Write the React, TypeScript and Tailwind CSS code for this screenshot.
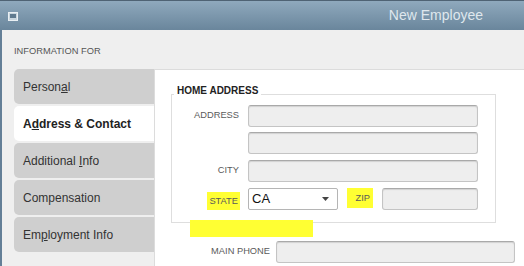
import React from "react";

const font = { fontFamily: '"Liberation Sans", Arial, sans-serif' };

function Field({ className = "" }: { className?: string }) {
  return (
    <div
      className={`h-[22px] rounded-[3px] border border-[#c4c4c4] border-t-[#a9a9a9] bg-[#eeeeee] shadow-[inset_0_1px_1px_rgba(0,0,0,0.12)] ${className}`}
    />
  );
}

function Label({ children, className = "" }: { children: React.ReactNode; className?: string }) {
  return <span className={`text-[9.3px] uppercase text-[#5a5a5a] ${className}`}>{children}</span>;
}

type Tab = { label: React.ReactNode; active?: boolean };

const tabs: Tab[] = [
  { label: <>Person<u>a</u>l</> },
  { label: <>A<u>d</u>dress &amp; Contact</>, active: true },
  { label: <>Additional <u>I</u>nfo</> },
  { label: <>Compensation</> },
  { label: <>Em<u>p</u>loyment Info</> },
];

export default function App() {
  return (
    <div style={font} className="relative flex h-[266px] w-[524px] flex-col overflow-hidden bg-[#efefef]">
      {/* title bar */}
      <div className="flex h-[30px] shrink-0 items-center border-t border-[#4f6374] bg-gradient-to-b from-[#8fa9bd] to-[#6a869c] pl-[8px] pr-[41px]">
        <svg width="10" height="9" viewBox="0 0 10 9" className="mt-[1px]">
          <rect x="0.5" y="0.5" width="9" height="8" fill="#c9d6df" stroke="#e9eff3" />
          <rect x="2" y="2" width="6" height="4" fill="#5f7a8f" />
        </svg>
        <span className="ml-auto text-[14px] text-[#dfe7ed]">New Employee</span>
      </div>

      <div className="flex min-h-0 flex-1 border-l-2 border-[#647f97]">
        <div className="flex flex-1 flex-col">
          <div className="h-[39px] pl-[12px] pt-[15px] text-[9.3px] uppercase text-[#555]">Information for</div>
          <div className="flex flex-1 pl-[12px]">
            {/* tabs */}
            <div className="flex w-[140px] shrink-0 flex-col gap-[2px]">
              {tabs.map((t, i) => (
                <div
                  key={i}
                  className={`flex h-[35px] items-center rounded-l-[5px] pl-[9px] text-[12px] ${
                    t.active ? "bg-white font-bold text-[#222]" : "bg-[#cfcfcf] text-[#333]"
                  }`}
                >
                  <span>{t.label}</span>
                </div>
              ))}
            </div>

            {/* content panel */}
            <div className="relative flex-1 border-l border-t border-[#dcdcdc] bg-white pl-[16px] pt-[16px]">
              <fieldset className="w-[325px] border border-[#dedede] px-0 pb-[12px] pt-[2px]">
                <legend className="ml-[2px] px-[3px] pb-[8px] text-[10px] font-bold leading-[9px] text-[#222]">
                  HOME ADDRESS
                </legend>
                <div className="flex items-center">
                  <Label className="w-[67px] text-right">Address</Label>
                  <Field className="ml-[9px] w-[230px]" />
                </div>
                <div className="mt-[5px] flex items-center">
                  <Field className="ml-[76px] w-[230px]" />
                </div>
                <div className="mt-[6px] flex items-center">
                  <Label className="w-[67px] text-right">City</Label>
                  <Field className="ml-[9px] w-[230px]" />
                </div>
                <div className="mt-[6px] flex items-center">
                  <div className="flex w-[67px] justify-end">
                    <span className="mt-[4px] -mr-[1px] bg-[#ffff33] px-[2px] py-[4px] text-[9.3px] leading-[10px] text-[#5a5a5a]">
                      STATE
                    </span>
                  </div>
                  <div className="ml-[9px] flex h-[22px] w-[90px] items-center justify-between rounded-[2px] border border-[#b5b5b5] bg-white pl-[3px] pr-[8px] text-[13px] text-[#111]">
                    CA
                    <svg width="7" height="4" viewBox="0 0 7 4">
                      <path d="M0 0h7L3.5 4z" fill="#444" />
                    </svg>
                  </div>
                  <span className="ml-[9px] -mt-[2px] w-[26px] bg-[#ffff33] pr-[3px] py-[5px] text-right text-[9.3px] leading-[10px] text-[#5a5a5a]">
                    ZIP
                  </span>
                  <Field className="ml-[9px] w-[96px]" />
                </div>
              </fieldset>

              <div className="mt-[18px] flex items-center">
                <Label className="w-[99px] text-right">Main phone</Label>
                <Field className="ml-[6px] h-[21px] w-[239px]" />
              </div>

              {/* highlighter mark */}
              <div className="absolute left-[35px] top-[150px] h-[17px] w-[123px] bg-[#ffff33]" />
            </div>
          </div>
        </div>
      </div>
    </div>
  );
}
